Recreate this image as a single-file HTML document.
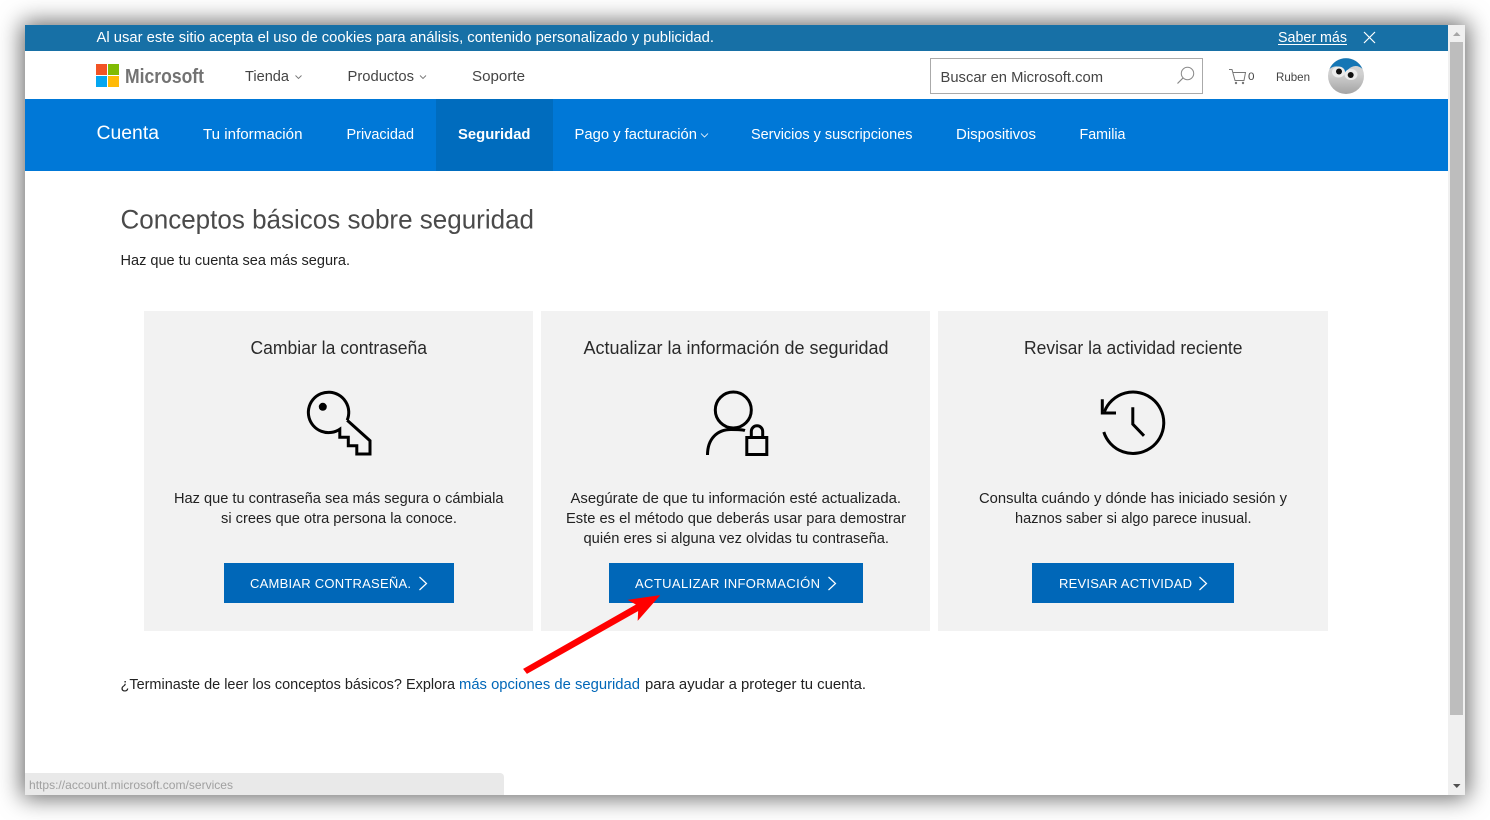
<!DOCTYPE html>
<html lang="es">
<head>
<meta charset="utf-8">
<title>Conceptos básicos sobre seguridad</title>
<style>
html,body{margin:0;padding:0;width:1490px;height:820px;overflow:hidden;background:#fff}
#win{position:absolute;left:25px;top:25px;width:1440px;height:770px;box-shadow:0 0 22px 3px rgba(0,0,0,.6);background:#fff}
svg{position:absolute;left:0;top:0;display:block}
text{font-family:"Liberation Sans",sans-serif;font-size:14.5px;fill:#222;white-space:pre}
.w{fill:#fff}
.h{fill:#444;font-size:15px}
.n{fill:#fff;font-size:14.5px}
.t{fill:#2a2a2a;font-size:18px}
.b{fill:#fff;font-size:13px}
.ic{fill:none;stroke:#000;stroke-width:3}
.ch{fill:none;stroke:#fff;stroke-width:1.2}
.cg{fill:none;stroke:#777;stroke-width:.9}
</style>
</head>
<body>
<div id="win"></div>
<svg width="1490" height="820" viewBox="0 0 1490 820" xmlns="http://www.w3.org/2000/svg">
<defs>
<linearGradient id="av" x1="0" y1="0" x2="0" y2="1">
<stop offset="0" stop-color="#d8d8d8"/><stop offset=".45" stop-color="#d0d0d0"/><stop offset="1" stop-color="#a4a4a4"/>
</linearGradient>
</defs>

<!-- banner -->
<rect x="25" y="25" width="1423" height="26" fill="#1770a6"/>
<text class="w" x="96.500" y="42" textLength="617.500" lengthAdjust="spacingAndGlyphs">Al usar este sitio acepta el uso de cookies para análisis, contenido personalizado y publicidad.</text>
<text class="w" x="1278" y="42" textLength="69" lengthAdjust="spacingAndGlyphs">Saber más</text>
<rect x="1278" y="44" width="69" height="1" fill="#fff"/>
<path d="M1364 32l11 11M1375 32l-11 11" fill="none" stroke="#fff" stroke-width="1.200"/>

<!-- scrollbar -->
<rect x="1448" y="25" width="17" height="770" fill="#f0f0f0"/>
<rect x="1450" y="42" width="13" height="673" fill="#bdbdbd"/>
<path d="M1453 36h7.500l-3.700-4z" fill="#a6a6a6"/>
<path d="M1453 784h7.500l-3.700 4z" fill="#505050"/>

<!-- header -->
<rect x="96" y="64" width="11" height="11" fill="#f25325"/>
<rect x="108" y="64" width="11" height="11" fill="#80bb03"/>
<rect x="96" y="76" width="11" height="11" fill="#05a6f0"/>
<rect x="108" y="76" width="11" height="11" fill="#ffba08"/>
<text x="125" y="83" textLength="79" lengthAdjust="spacingAndGlyphs" style="font-size:20px;font-weight:bold;fill:#737373">Microsoft</text>
<text class="h" x="245" y="81" textLength="44" lengthAdjust="spacingAndGlyphs">Tienda</text>
<path class="cg" d="M295.500 75.500l3 3 3-3"/>
<text class="h" x="347.500" y="81" textLength="66.500" lengthAdjust="spacingAndGlyphs">Productos</text>
<path class="cg" d="M420 75.500l3 3 3-3"/>
<text class="h" x="472" y="81" textLength="53" lengthAdjust="spacingAndGlyphs">Soporte</text>

<rect x="930.500" y="58.500" width="272" height="35" fill="#fff" stroke="#aaa"/>
<text x="940.500" y="82" textLength="162.500" lengthAdjust="spacingAndGlyphs" style="font-size:15px;fill:#444">Buscar en Microsoft.com</text>
<circle cx="1187.500" cy="73.500" r="6.200" fill="none" stroke="#888" stroke-width="1"/>
<path d="M1183 78l-5.500 5.500" stroke="#888" stroke-width="1.200" fill="none"/>
<path d="M1229 69.500h3l3 11h9l1.500-8h-13" fill="none" stroke="#777" stroke-width="1"/>
<circle cx="1236" cy="83" r="1.200" fill="#777"/><circle cx="1243" cy="83" r="1.200" fill="#777"/>
<text x="1248" y="80" textLength="6.500" lengthAdjust="spacingAndGlyphs" style="font-size:11px;fill:#444">0</text>
<text x="1276" y="81" textLength="34" lengthAdjust="spacingAndGlyphs" style="font-size:12px;fill:#444">Ruben</text>
<circle cx="1346" cy="76" r="18" fill="url(#av)"/>
<path d="M1329.500 69A18 18 0 0 1 1362.500 69C1358 65 1353 65 1348 69.500L1345 73L1342 68C1338 65.500 1333 66 1329.500 69Z" fill="#1476b5"/>
<ellipse cx="1338.500" cy="72" rx="6.500" ry="5.500" fill="#ececec"/>
<ellipse cx="1351" cy="74.500" rx="6.500" ry="5.500" fill="#ececec"/>
<circle cx="1339" cy="71.500" r="3" fill="#111"/>
<circle cx="1350.700" cy="75" r="3" fill="#111"/>

<!-- nav -->
<rect x="25" y="99" width="1423" height="72" fill="#0078d7"/>
<rect x="436" y="99" width="117" height="72" fill="#006cbe"/>
<text class="w" x="96.500" y="139" textLength="62.500" lengthAdjust="spacingAndGlyphs" style="font-size:19px">Cuenta</text>
<text class="n" x="203" y="139" textLength="99.500" lengthAdjust="spacingAndGlyphs">Tu información</text>
<text class="n" x="346.500" y="139" textLength="67.500" lengthAdjust="spacingAndGlyphs">Privacidad</text>
<text class="n" x="458" y="139" textLength="72.500" lengthAdjust="spacingAndGlyphs" style="font-weight:bold">Seguridad</text>
<text class="n" x="574.500" y="139" textLength="122.500" lengthAdjust="spacingAndGlyphs">Pago y facturación</text>
<path d="M701 133.500l3.500 3.500 3.500-3.500" fill="none" stroke="#fff" stroke-width=".8"/>
<text class="n" x="751" y="139" textLength="161.500" lengthAdjust="spacingAndGlyphs">Servicios y suscripciones</text>
<text class="n" x="956" y="139" textLength="80" lengthAdjust="spacingAndGlyphs">Dispositivos</text>
<text class="n" x="1079.500" y="139" textLength="46" lengthAdjust="spacingAndGlyphs">Familia</text>

<!-- heading -->
<text x="120.500" y="228.500" textLength="413.500" lengthAdjust="spacingAndGlyphs" style="font-size:27px;fill:#4a4a4a">Conceptos básicos sobre seguridad</text>
<text x="120.500" y="265" textLength="229.500" lengthAdjust="spacingAndGlyphs">Haz que tu cuenta sea más segura.</text>

<!-- cards -->
<rect x="144" y="311" width="389" height="320" fill="#f2f2f2"/>
<rect x="541" y="311" width="389" height="320" fill="#f2f2f2"/>
<rect x="938" y="311" width="390" height="320" fill="#f2f2f2"/>

<text class="t" x="250.500" y="354" textLength="176.500" lengthAdjust="spacingAndGlyphs">Cambiar la contraseña</text>
<text class="t" x="583.500" y="354" textLength="305" lengthAdjust="spacingAndGlyphs">Actualizar la información de seguridad</text>
<text class="t" x="1024" y="354" textLength="218.500" lengthAdjust="spacingAndGlyphs">Revisar la actividad reciente</text>

<!-- key -->
<path class="ic" d="M347.200 420.200A20.200 20.200 0 1 0 339.800 429.200V437.300H348.300V445.700H356.800V454H370V440.700L347.200 420.200"/>
<circle cx="322.800" cy="406.800" r="4" fill="#000"/>

<!-- person lock -->
<circle class="ic" cx="733.300" cy="410" r="18"/>
<path class="ic" d="M707.500 455C707.500 439 717 429.500 731 429.500C737 429.500 742 429.500 745 430.500"/>
<rect class="ic" x="746.800" y="437.500" width="20" height="17"/>
<path class="ic" d="M751.300 437V431.500A5.700 5.700 0 0 1 762.700 431.500V437"/>

<!-- clock -->
<path class="ic" d="M1103.800 432A30.700 30.700 0 1 0 1104.500 411.500"/>
<path class="ic" d="M1102.300 399.300V413H1116"/>
<path class="ic" d="M1132.800 407.300V424.200L1144 435.800"/>

<!-- paragraphs -->
<text x="174" y="503" textLength="329.500" lengthAdjust="spacingAndGlyphs">Haz que tu contraseña sea más segura o cámbiala</text>
<text x="221" y="523" textLength="236" lengthAdjust="spacingAndGlyphs">si crees que otra persona la conoce.</text>
<text x="570.500" y="503" textLength="330.500" lengthAdjust="spacingAndGlyphs">Asegúrate de que tu información esté actualizada.</text>
<text x="566" y="523" textLength="340" lengthAdjust="spacingAndGlyphs">Este es el método que deberás usar para demostrar</text>
<text x="583.500" y="543" textLength="305.500" lengthAdjust="spacingAndGlyphs">quién eres si alguna vez olvidas tu contraseña.</text>
<text x="979" y="503" textLength="308" lengthAdjust="spacingAndGlyphs">Consulta cuándo y dónde has iniciado sesión y</text>
<text x="1015" y="523" textLength="236.500" lengthAdjust="spacingAndGlyphs">haznos saber si algo parece inusual.</text>

<!-- buttons -->
<rect x="224" y="563" width="230" height="40" fill="#0067b8"/>
<rect x="609" y="563" width="254" height="40" fill="#0067b8"/>
<rect x="1032" y="563" width="202" height="40" fill="#0067b8"/>
<text class="b" x="250" y="588" textLength="161" lengthAdjust="spacing">CAMBIAR CONTRASEÑA.</text>
<path class="ch" d="M419.500 577l7 6.500-7 6.500"/>
<text class="b" x="635" y="588" textLength="185" lengthAdjust="spacing">ACTUALIZAR INFORMACIÓN</text>
<path class="ch" d="M828.500 577l7 6.500-7 6.500"/>
<text class="b" x="1059" y="588" textLength="133" lengthAdjust="spacing">REVISAR ACTIVIDAD</text>
<path class="ch" d="M1199.500 577l7 6.500-7 6.500"/>

<!-- footer -->
<text x="120.500" y="689" textLength="334.500" lengthAdjust="spacingAndGlyphs">¿Terminaste de leer los conceptos básicos? Explora</text>
<text x="459" y="689" textLength="181" lengthAdjust="spacingAndGlyphs" style="fill:#0067b8">más opciones de seguridad</text>
<text x="645" y="689" textLength="221" lengthAdjust="spacingAndGlyphs">para ayudar a proteger tu cuenta.</text>

<!-- arrow -->
<path d="M523.500 669L636.500 604.500L628.500 600L659.500 595.500L638 620L638.500 610.500L527 673.500Z" fill="#f00" stroke="#f00" stroke-width=".6"/>

<!-- status bar -->
<path d="M25 773H500a4 4 0 0 1 4 4V795H25Z" fill="#e9e9e9"/>
<text x="29" y="789" textLength="204" lengthAdjust="spacingAndGlyphs" style="font-size:12px;fill:#a0a0a0">https://account.microsoft.com/services</text>
</svg>
</body>
</html>
